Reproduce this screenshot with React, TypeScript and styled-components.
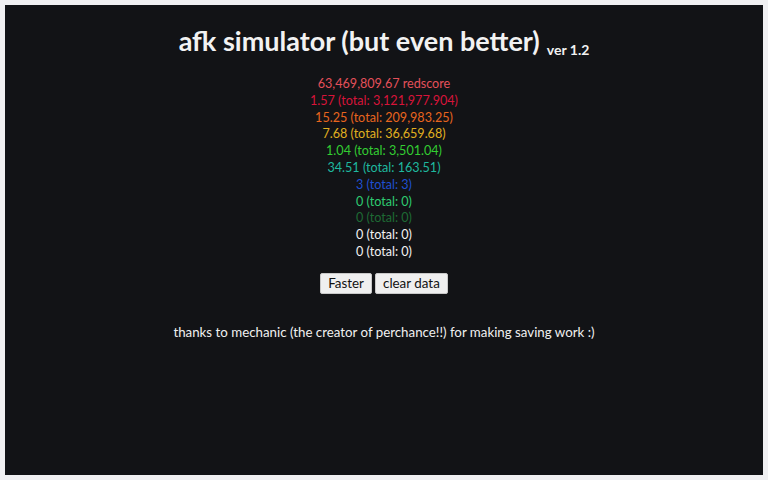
import styled, { createGlobalStyle } from 'styled-components';

const GlobalStyle = createGlobalStyle`
  html, body {
    margin: 0;
    padding: 0;
    background: #f0f0f2;
  }
  body {
    padding: 5px;
    font-family: Lato, 'Noto Sans', sans-serif;
  }
`;

// 게임 화면 전체 (어두운 판)
const Screen = styled.div`
  height: 470px;
  width: 758px;
  background: #121316;
  color: #f2f2f2;
  display: flex;
  flex-direction: column;
  align-items: center;
  box-sizing: border-box;
  padding-top: 20px;
`;

const TitleRow = styled.div`
  display: flex;
  align-items: baseline;
  gap: 7px;
`;

const Title = styled.h1`
  margin: 0;
  font-size: 27px;
  font-weight: 700;
  line-height: 32px;
`;

const Version = styled.span`
  font-size: 14px;
  font-weight: 700;
  position: relative;
  top: 4px;
`;

const Stats = styled.div`
  margin-top: 19px;
  display: flex;
  flex-direction: column;
  align-items: center;
`;

const StatLine = styled.div<{ $color: string }>`
  font-size: 12.6px;
  line-height: 16.8px;
  color: ${(p) => p.$color};
`;

const BtnBox = styled.div`
  display: flex;
  gap: 3px;
  margin-top: 12px;
`;

const GameBtn = styled.button`
  font-family: inherit;
  font-size: 13.4px;
  color: #111;
  background: #efefef;
  border: 1px solid #c8c8c8;
  border-radius: 2px;
  padding: 0 7px;
  height: 21px;
  line-height: 19px;
`;

const Thanks = styled.p`
  margin: 30px 0 0;
  font-size: 13.3px;
  color: #f0f0f0;
`;

const stats = [
  { text: '63,469,809.67 redscore', color: '#e4505a' },
  { text: '1.57 (total: 3,121,977.904)', color: '#d8143a' },
  { text: '15.25 (total: 209,983.25)', color: '#e8651e' },
  { text: '7.68 (total: 36,659.68)', color: '#e0b020' },
  { text: '1.04 (total: 3,501.04)', color: '#32cd32' },
  { text: '34.51 (total: 163.51)', color: '#1fb89f' },
  { text: '3 (total: 3)', color: '#1f4fd0' },
  { text: '0 (total: 0)', color: '#2ecc71' },
  { text: '0 (total: 0)', color: '#1e6a34' },
  { text: '0 (total: 0)', color: '#f2f2f2' },
  { text: '0 (total: 0)', color: '#f2f2f2' },
];

const App = () => {
  return (
    <>
      <GlobalStyle />
      <Screen>
        <TitleRow>
          <Title>afk simulator (but even better)</Title>
          <Version>ver 1.2</Version>
        </TitleRow>
        <Stats>
          {stats.map((s, i) => (
            <StatLine key={i} $color={s.color}>
              {s.text}
            </StatLine>
          ))}
        </Stats>
        <BtnBox>
          <GameBtn>Faster</GameBtn>
          <GameBtn>clear data</GameBtn>
        </BtnBox>
        <Thanks>thanks to mechanic (the creator of perchance!!) for making saving work :)</Thanks>
      </Screen>
    </>
  );
};

export default App;
